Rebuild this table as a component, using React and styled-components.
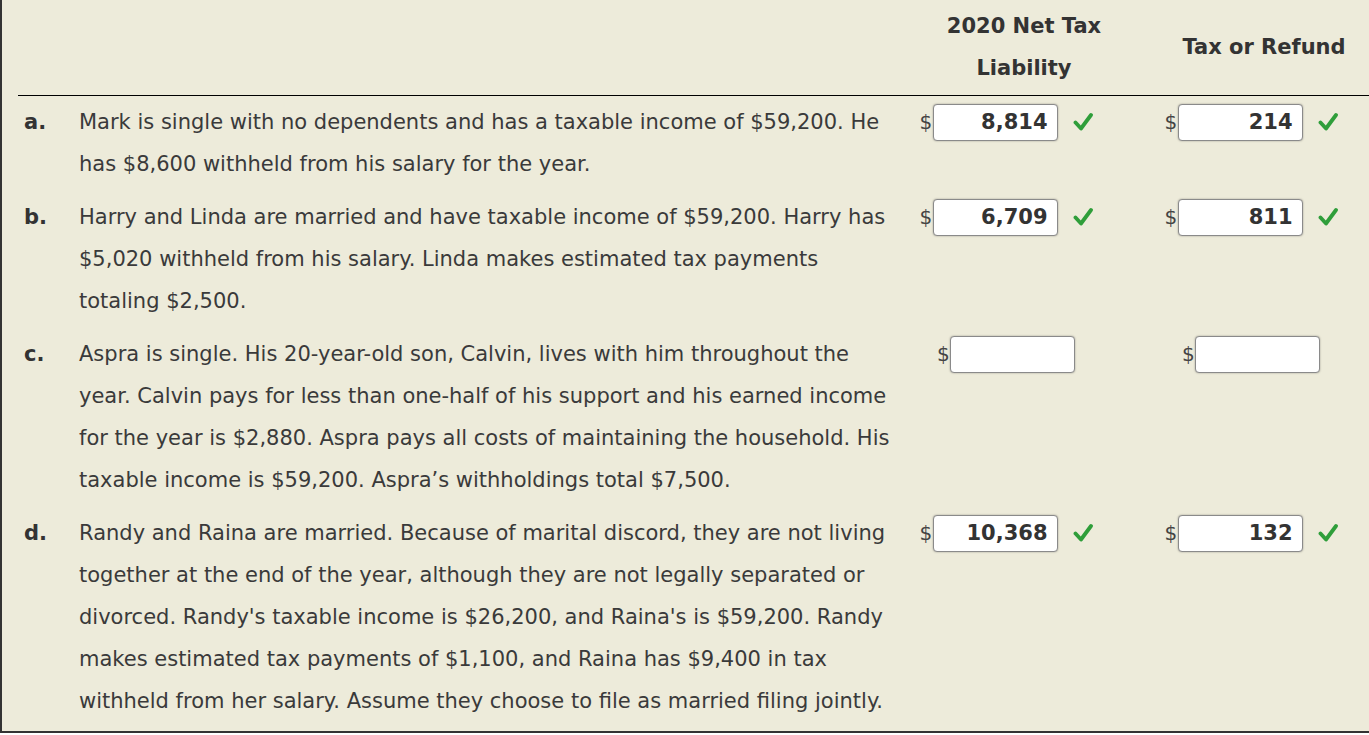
import React from "react";
import styled, { createGlobalStyle } from "styled-components";

const Global = createGlobalStyle`
  html, body { margin: 0; padding: 0; background: #ffffff; overflow: hidden; }
  body { font-family: "DejaVu Sans", Verdana, sans-serif; }
`;

const Frame = styled.div`
  box-sizing: border-box;
  width: 1420px;
  height: 733px;
  background: #edebda;
  border-left: 2px solid #333333;
  border-bottom: 2px solid #333333;
  padding-left: 16px;
  color: #333333;
  font-size: 21px;
`;

const Grid = styled.div`
  display: grid;
  grid-template-columns: 61px 829px 232px 258px;
`;

const HeadRow = styled(Grid)`
  border-bottom: 1px solid #000000;
`;

const HeadCell = styled.div`
  padding: 5px ${(p) => p.$padRight || 0}px 6px 0;
  font-weight: bold;
  line-height: 42px;
  text-align: center;
  align-self: center;
`;

const Row = styled(Grid)`
  padding: 5px 0 6px;
  line-height: 42px;
`;

const Label = styled.div`
  font-weight: bold;
  padding-left: 6px;
`;

const Text = styled.div`
  white-space: nowrap;
  color: #3a3a3a;
`;

const AnswerCell = styled.div`
  display: flex;
  align-items: center;
  justify-content: center;
  height: 42px;
  padding-right: ${(p) => p.$padRight}px;
`;

const Dollar = styled.span`
  color: #444444;
  font-size: 20px;
  width: 13px;
  text-align: left;
`;

const Box = styled.input`
  box-sizing: border-box;
  width: 125px;
  height: 37px;
  margin: 0;
  border: 1px solid #8a8a8a;
  border-radius: 4px;
  background: #ffffff;
  box-shadow: 0 0 2px rgba(0, 0, 0, 0.35);
  font-family: "DejaVu Sans", Verdana, sans-serif;
  font-size: 21px;
  font-weight: bold;
  color: #333333;
  text-align: right;
  padding: 0 9px 0 4px;
  outline: none;
`;

const Check = styled.svg`
  width: 20px;
  height: 20px;
  margin-left: 15px;
  flex: none;
`;

const CheckMark = () => (
  <Check viewBox="0 0 20 20">
    <path
      d="M2.5 10.5 L8 16.5 L18 3"
      fill="none"
      stroke="#2f9e3a"
      strokeWidth="3.8"
      strokeLinecap="round"
      strokeLinejoin="round"
    />
  </Check>
);

const Answer = ({ value, checked, padRight }) => (
  <AnswerCell $padRight={padRight}>
    <Dollar>$</Dollar>
    <Box readOnly defaultValue={value} />
    {checked && <CheckMark />}
  </AnswerCell>
);

const rows = [
  {
    label: "a.",
    lines: [
      "Mark is single with no dependents and has a taxable income of $59,200. He",
      "has $8,600 withheld from his salary for the year.",
    ],
    liability: "8,814",
    refund: "214",
    checked: true,
  },
  {
    label: "b.",
    lines: [
      "Harry and Linda are married and have taxable income of $59,200. Harry has",
      "$5,020 withheld from his salary. Linda makes estimated tax payments",
      "totaling $2,500.",
    ],
    liability: "6,709",
    refund: "811",
    checked: true,
  },
  {
    label: "c.",
    lines: [
      "Aspra is single. His 20-year-old son, Calvin, lives with him throughout the",
      "year. Calvin pays for less than one-half of his support and his earned income",
      "for the year is $2,880. Aspra pays all costs of maintaining the household. His",
      "taxable income is $59,200. Aspra\u2019s withholdings total $7,500.",
    ],
    liability: "",
    refund: "",
    checked: false,
  },
  {
    label: "d.",
    lines: [
      "Randy and Raina are married. Because of marital discord, they are not living",
      "together at the end of the year, although they are not legally separated or",
      "divorced. Randy's taxable income is $26,200, and Raina's is $59,200. Randy",
      "makes estimated tax payments of $1,100, and Raina has $9,400 in tax",
      "withheld from her salary. Assume they choose to file as married filing jointly.",
    ],
    liability: "10,368",
    refund: "132",
    checked: true,
  },
];

export default function App() {
  return (
    <>
      <Global />
      <Frame>
        <HeadRow>
          <div />
          <div />
          <HeadCell>
            2020 Net Tax
            <br />
            Liability
          </HeadCell>
          <HeadCell $padRight={10}>Tax or Refund</HeadCell>
        </HeadRow>
        {rows.map((r) => (
          <Row key={r.label}>
            <Label>{r.label}</Label>
            <Text>
              {r.lines.map((l, i) => (
                <div key={i}>{l}</div>
              ))}
            </Text>
            <Answer value={r.liability} checked={r.checked} padRight={36} />
            <Answer value={r.refund} checked={r.checked} padRight={36} />
          </Row>
        ))}
      </Frame>
    </>
  );
}
